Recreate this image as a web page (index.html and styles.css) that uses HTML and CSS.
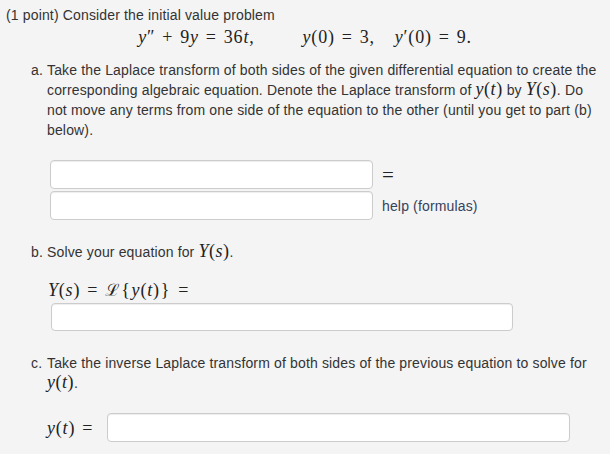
FILE: index.html
```html
<!DOCTYPE html>
<html>
<head>
<meta charset="utf-8">
<link rel="stylesheet" href="styles.css">
</head>
<body>
<div class="problem">
  <p class="intro">(1 point) Consider the initial value problem</p>
  <div class="display"><span class="math"><i>y</i>″<span class="bin">+</span>9<i>y</i><span class="rel">=</span>36<i>t</i>,<span class="qquad"></span><i>y</i>(0)<span class="rel">=</span>3,<span class="quad"></span><i>y</i>′(0)<span class="rel">=</span>9.</span></div>

  <div class="part part-a">
    <span class="label">a.</span>
    <div class="body">
      <p class="text">Take the Laplace transform of both sides of the given differential equation to create the corresponding algebraic equation. Denote the Laplace transform of <span class="math im"><i>y</i>(<i>t</i>)</span> by <span class="math im"><i>Y</i>(<i>s</i>)</span>. Do not move any terms from one side of the equation to the other (until you get to part (b) below).</p>
      <div class="eqgrid">
        <input class="ans ans-a" type="text">
        <span class="math eqsign">=</span>
        <input class="ans ans-a" type="text">
        <a class="help">help (formulas)</a>
      </div>
    </div>
  </div>

  <div class="part part-b">
    <span class="label">b.</span>
    <div class="body">
      <p class="text">Solve your equation for <span class="math im"><i>Y</i>(<i>s</i>)</span>.</p>
      <div class="mathline"><span class="math"><i>Y</i>(<i>s</i>)<span class="rel">=</span><span class="script">ℒ</span><span class="brace">{</span><i>y</i>(<i>t</i>)<span class="brace">}</span><span class="rel">=</span></span></div>
      <input class="ans ans-b" type="text">
    </div>
  </div>

  <div class="part part-c">
    <span class="label">c.</span>
    <div class="body">
      <p class="text">Take the inverse Laplace transform of both sides of the previous equation to solve for <span class="math im"><i>y</i>(<i>t</i>)</span>.</p>
      <div class="answerrow">
        <span class="math"><i>y</i>(<i>t</i>)<span class="rel">=</span></span>
        <input class="ans ans-c" type="text">
      </div>
    </div>
  </div>
</div>
</body>
</html>
```

FILE: styles.css
```css
html, body {
  margin: 0;
  padding: 0;
  background: #f4f4f4;
}

body {
  font-family: "Liberation Sans", Arial, sans-serif;
  font-size: 14px;
  letter-spacing: 0.15px;
  line-height: 20px;
  color: #333;
}

.problem {
  padding: 5px 8px 0 6px;
}

p {
  margin: 0;
}

.math {
  font-family: "Liberation Serif", "Times New Roman", serif;
  font-size: 18px;
  letter-spacing: 0.8px;
  color: #222;
  white-space: nowrap;
}

.math i {
  font-style: italic;
}

.im {
  font-size: 18px;
  letter-spacing: 0.5px;
  line-height: 17px;
}

.bin {
  margin: 0 7px;
}

.rel {
  margin: 0 7px;
}

.qquad {
  display: inline-block;
  width: 48px;
}

.quad {
  display: inline-block;
  width: 20px;
}

.display {
  height: 24px;
  line-height: 24px;
  text-align: center;
  margin-left: -6px;
  margin-right: -8px;
}

.part {
  display: flex;
  padding-left: 25px;
}

.label {
  width: 16px;
  flex: none;
}

.body {
  flex: 1;
  min-width: 0;
}

.part-a {
  margin-top: 11px;
}

.eqgrid {
  display: grid;
  grid-template-columns: 323px auto;
  column-gap: 9px;
  row-gap: 2px;
  align-items: center;
  margin-top: 20px;
  margin-left: 3px;
}

.ans {
  box-sizing: border-box;
  display: block;
  background: #fff;
  border: 1px solid #ccc;
  border-radius: 4px;
  box-shadow: inset 0 1px 1px rgba(0, 0, 0, 0.075);
  margin: 0;
  padding: 4px 6px;
  font: inherit;
}

.ans-a {
  width: 323px;
  height: 29px;
}

.eqsign {
  font-size: 21px;
  line-height: 20px;
}

.help {
  color: #34425a;
  text-decoration: none;
}

.part-b {
  margin-top: 22px;
}

.mathline {
  height: 24px;
  line-height: 24px;
  margin-top: 16px;
  padding-left: 1px;
}

.script {
  font-family: "DejaVu Serif", "Noto Sans", serif;
  font-style: italic;
  font-size: 17px;
}

.brace {
  margin: 0 1px;
}

.ans-b {
  width: 462px;
  height: 28px;
  margin-top: 1px;
  margin-left: 4px;
}

.part-c {
  margin-top: 22px;
}

.answerrow {
  display: flex;
  align-items: center;
  margin-top: 20px;
}

.answerrow .math {
  width: 60px;
  flex: none;
}

.ans-c {
  width: 463px;
  height: 29px;
}
```
